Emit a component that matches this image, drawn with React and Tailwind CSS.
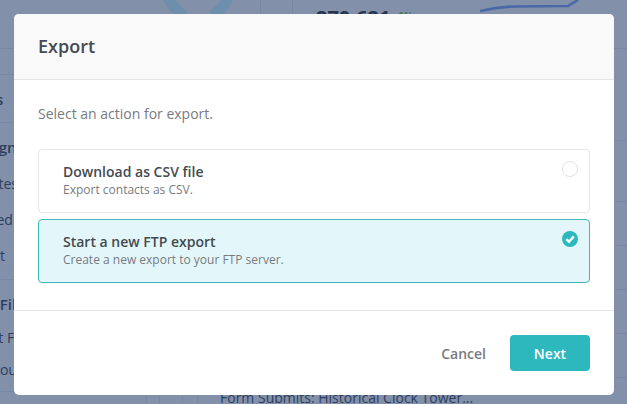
import React from "react";

const line = "border-[#7688a3]";

function SideRow({ text, offset, bold, height }) {
  return (
    <div className={"flex items-center overflow-hidden whitespace-nowrap " + height}>
      <span className={(bold ? "font-semibold text-[15px] " : "text-[14px] ") + "text-[#2e3f5e] " + offset}>{text}</span>
    </div>
  );
}

function Option({ title, sub, selected }) {
  return (
    <div
      className={
        "flex h-[64px] items-start justify-between rounded-[4px] border pl-[24px] pr-[11px] " +
        (selected ? "border-[#3fb6bb] bg-[#e3f7fa]" : "border-[#e6e6e6] bg-white")
      }
    >
      <div className="pt-[12px]">
        <div className="text-[14px] leading-[19px] font-semibold text-[#444a4f]">{title}</div>
        <div className="text-[12px] leading-[17px] text-[#777b80]">{sub}</div>
      </div>
      <div className="pt-[11px]">
        {selected ? (
          <svg width="16" height="16" viewBox="0 0 16 16" className="block">
            <circle cx="8" cy="8" r="8" fill="#2db8bd" />
            <path d="M4.3 8.2 L7 10.8 L11.8 5.4" fill="none" stroke="#fff" strokeWidth="2.4" />
          </svg>
        ) : (
          <div className="h-[16px] w-[16px] rounded-full border border-[#e2e2e2] bg-white" />
        )}
      </div>
    </div>
  );
}

export default function App() {
  return (
    <div className="relative h-[404px] w-[627px] overflow-hidden bg-[#8390aa] font-['Open_Sans',sans-serif]">
      {/* dimmed page behind the dialog */}
      <div className="flex h-full">
        <aside className="w-[146px] shrink-0">
          <div className={"h-[49px] border-b " + line} />
          <div className={"h-[26px] border-b " + line} />
          <div className={"flex h-[48px] items-center whitespace-nowrap border-b pt-[2px] " + line}>
            <span className="ml-[-42px] text-[15px] font-semibold text-[#2e3f5e]">Forms</span>
          </div>
          <div className="pt-[6px]">
            <SideRow text="Campaigns" bold offset="ml-[-56px]" height="h-[36px]" />
            <SideRow text="Templates" offset="ml-[-50px]" height="h-[36px]" />
            <SideRow text="Archived" offset="ml-[-44px]" height="h-[36px]" />
            <SideRow text="Sent" offset="ml-[-24px]" height="h-[36px]" />
          </div>
          <div className={"h-[7px] border-b " + line} />
          <div className="pt-[6px]">
            <SideRow text="Saved Filters" bold offset="ml-[-47px]" height="h-[36px]" />
            <SideRow text="Contact Filters" offset="ml-[-47px]" height="h-[30px]" />
            <SideRow text="Groups" offset="ml-[-16px]" height="h-[34px]" />
          </div>
          <div className={"h-[6px] border-b " + line} />
        </aside>
        <main className="min-w-0 flex-1">
          <div className={"flex h-[49px] border-b " + line}>
            <div className={"w-[115px] shrink-0 border-r " + line}>
              <svg width="100" height="14" viewBox="0 0 100 14" className="ml-[2px] block">
                <path d="M20 -2 Q26 9 36 16" fill="none" stroke="#6e8fab" strokeWidth="11" />
                <path d="M80 -2 Q75 9 64 16" fill="none" stroke="#6e8fab" strokeWidth="11" />
              </svg>
            </div>
            <div className={"w-[32px] shrink-0 border-r " + line} />
            <div className="flex flex-1 items-start pl-[23px]">
              <span className="pt-[4px] text-[20px] leading-[28px] font-bold text-[#25344f]">270,621</span>
              <span className="ml-[8px] pt-[9px] text-[10px] font-semibold text-[#2f7a52]">1%</span>
              <svg width="100" height="14" viewBox="0 0 100 14" className="ml-[67px] block shrink-0">
                <path d="M0 11 C12 8 24 6.5 36 6.5 L88 6 L98 0" fill="none" stroke="#4a68a8" strokeWidth="2.5" />
              </svg>
            </div>
          </div>
          <div className={"h-[92px] border-b " + line} />
          <div className={"h-[61px] border-b " + line} />
          <div className={"h-[44px] border-b " + line} />
          <div className={"h-[44px] border-b " + line} />
          <div className={"h-[44px] border-b " + line} />
          <div className={"h-[44px] border-b " + line} />
          <div className="flex h-[44px]">
            <div className={"w-[13px] border-l " + line} />
            <div className={"w-[23px] border-l " + line} />
            <div className={"w-[15px] border-l " + line} />
            <div className={"w-[23px] border-l " + line} />
            <div className="pt-[8px] text-[14px] leading-[24px] whitespace-nowrap text-[#2e3f5e]">
              Form Submits: Historical Clock Tower...
            </div>
          </div>
        </main>
      </div>

      {/* dialog */}
      <div className="absolute inset-0 pt-[14px] pl-[14px]">
        <div className="flex h-[381px] w-[600px] flex-col overflow-hidden rounded-[5px] bg-white">
          <header className="flex h-[66px] shrink-0 items-center border-b border-[#e6e6e6] bg-[#f9f9f9] px-[24px] pb-[1px]">
            <h2 className="text-[18px] font-semibold text-[#444a4f]">Export</h2>
          </header>
          <div className="flex h-[230px] shrink-0 flex-col px-[24px] pt-[24px]">
            <p className="text-[14px] leading-[19px] text-[#777b80]">Select an action for export.</p>
            <div className="mt-[26px] flex flex-col gap-[6px]">
              <Option title="Download as CSV file" sub="Export contacts as CSV." />
              <Option title="Start a new FTP export" sub="Create a new export to your FTP server." selected />
            </div>
          </div>
          <footer className="flex flex-1 items-start justify-end gap-[24px] border-t border-[#e6e6e6] px-[24px] pt-[24px]">
            <button className="h-[36px] text-[14px] font-semibold text-[#777b80]">Cancel</button>
            <button className="h-[36px] w-[80px] rounded-[4px] bg-[#2db8bd] text-[14px] font-semibold text-white">Next</button>
          </footer>
        </div>
      </div>
    </div>
  );
}
